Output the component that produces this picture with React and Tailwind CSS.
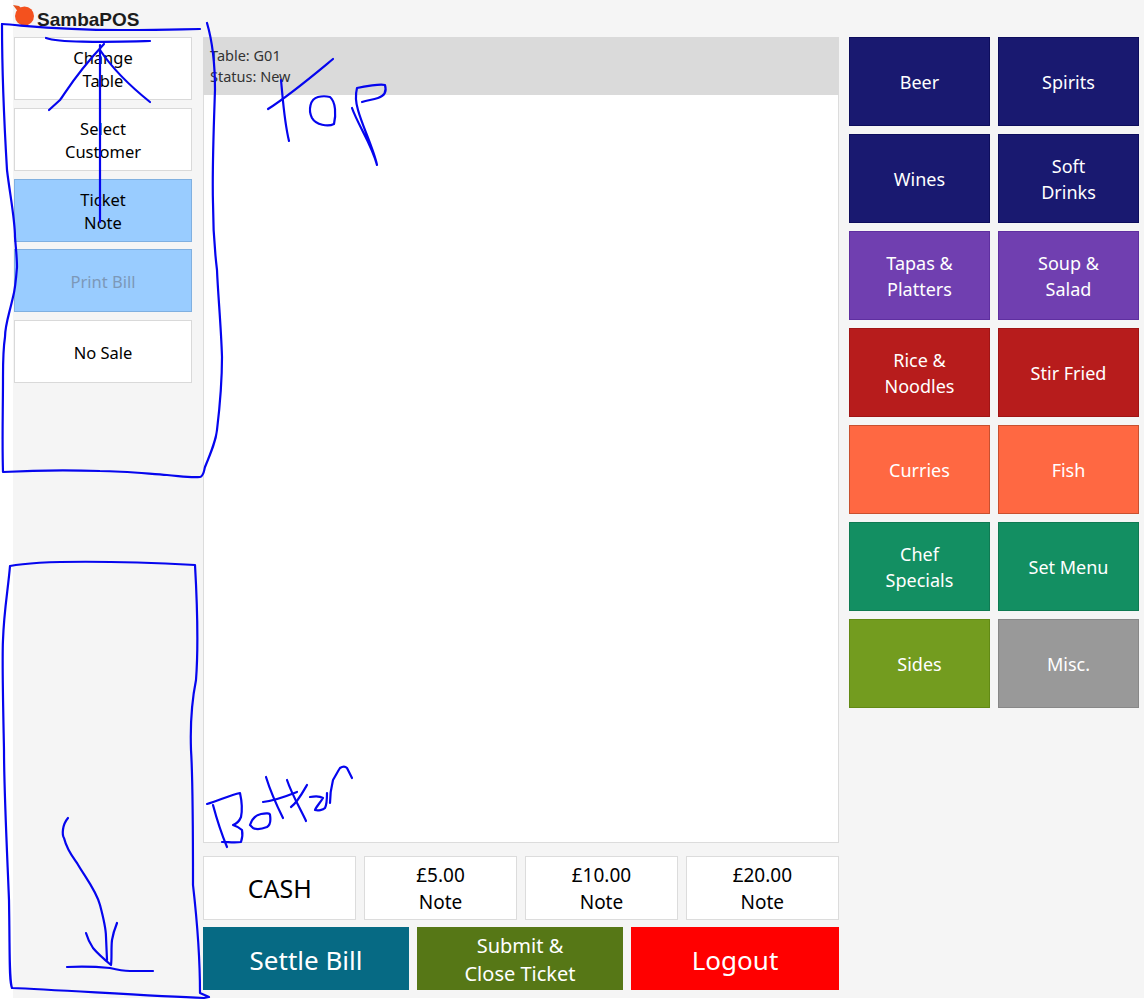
import React from 'react';

const sideButtons = [
  { label: ['Change', 'Table'], className: 'bg-white border-[#d9d9d9] text-black' },
  { label: ['Select', 'Customer'], className: 'bg-white border-[#d9d9d9] text-black' },
  { label: ['Ticket', 'Note'], className: 'bg-[#99ccff] border-[#80b0e0] text-black' },
  { label: ['Print Bill'], className: 'bg-[#99ccff] border-[#80b0e0] text-[#7c98b8]' },
  { label: ['No Sale'], className: 'bg-white border-[#d9d9d9] text-black' },
];

const categories = [
  { label: ['Beer'], className: 'bg-[#191970] border-[#0d0d5c]' },
  { label: ['Spirits'], className: 'bg-[#191970] border-[#0d0d5c]' },
  { label: ['Wines'], className: 'bg-[#191970] border-[#0d0d5c]' },
  { label: ['Soft', 'Drinks'], className: 'bg-[#191970] border-[#0d0d5c]' },
  { label: ['Tapas &', 'Platters'], className: 'bg-[#703fb0] border-[#5f2fa0]' },
  { label: ['Soup &', 'Salad'], className: 'bg-[#703fb0] border-[#5f2fa0]' },
  { label: ['Rice &', 'Noodles'], className: 'bg-[#b71c1c] border-[#a01414]' },
  { label: ['Stir Fried'], className: 'bg-[#b71c1c] border-[#a01414]' },
  { label: ['Curries'], className: 'bg-[#ff6842] border-[#c8502f]' },
  { label: ['Fish'], className: 'bg-[#ff6842] border-[#c8502f]' },
  { label: ['Chef', 'Specials'], className: 'bg-[#138f62] border-[#0f7a52]' },
  { label: ['Set Menu'], className: 'bg-[#138f62] border-[#0f7a52]' },
  { label: ['Sides'], className: 'bg-[#739c1f] border-[#628a14]' },
  { label: ['Misc.'], className: 'bg-[#999999] border-[#888888]' },
];

const notes = [
  { label: ['CASH'], className: 'pt-[2px] text-[25px]' },
  { label: ['£5.00', 'Note'], className: 'pt-[2px] text-[19px] leading-[27px]' },
  { label: ['£10.00', 'Note'], className: 'pt-[2px] text-[19px] leading-[27px]' },
  { label: ['£20.00', 'Note'], className: 'pt-[2px] text-[19px] leading-[27px]' },
];

const Lines = ({ label }) => label.map((line) => <span key={line} className="block">{line}</span>);

// the blue pen marks somebody drew over the screenshot
const scribbles = [
  'M2 24 C30 26 60 30 120 30 S180 29 200 29',
  'M2 24 C2 60 4 120 7 170 C10 195 15 220 15 237 C16 250 17 258 17 267 C16 280 15 290 13 297 C9 315 5 325 5 337 C3 350 3 365 3 377 C3 410 2 440 3 472 C40 470 70 470 100 471 C125 471 150 474 167 475 C180 476 190 478 200 477 C204 476 204 470 205 467 C212 450 216 440 217 430 C220 405 222 380 222 357 C221 325 218 295 217 270 C214 245 213 225 213 203 C212 170 214 120 215 90 C215 60 212 40 207 23',
  'M46 38 C60 43 100 42 150 41',
  'M100 45 L100 222',
  'M49 110 L60 100 C66 92 75 75 104 44',
  'M100 50 C110 65 125 82 150 102',
  'M268 109 C290 95 310 78 333 59',
  'M281 80 C283 100 284 120 289 141',
  'M318 97 C310 99 308 110 312 118 C316 125 328 127 334 124 C336 115 336 102 330 97 C326 96 322 96 318 97',
  'M352 108 C358 125 372 145 377 165 C374 150 362 125 358 110 C355 100 356 92 357 88 C365 86 380 84 385 85 C387 92 384 96 378 98 C372 100 368 100 362 102',
  'M10 566 C40 560 120 561 195 565 C197 600 199 640 196 680 C192 700 190 720 191 750 C193 780 193 850 193 885 C197 920 200 960 200 993 L209 997 L204 998 C150 996 60 990 12 988 C9 980 10 960 9 900 C7 850 4 790 4 750 C3 700 2 660 3 640 C4 610 8 590 10 566',
  'M68 818 C62 825 62 835 64 838 C67 850 72 856 77 863 C85 877 96 890 100 905 C104 920 106 930 106 937 L107 960',
  'M86 933 C88 940 91 945 93 948 C98 954 105 960 111 965 C112 958 111 948 112 940 C113 934 115 928 117 923',
  'M67 967 C85 966 100 967 110 968 C118 970 124 971 130 971 L153 971',
  'M207 804 C218 801 230 795 240 793 C242 802 242 812 241 817 C239 822 236 824 233 825 C236 826 240 828 242 830 C243 835 242 839 241 842 C235 843 228 842 222 842',
  'M213 805 C217 820 222 835 227 847',
  'M266 777 C270 790 278 808 283 818',
  'M263 802 C272 801 287 796 297 792',
  'M287 780 C292 795 302 812 306 821',
  'M291 807 C297 803 303 792 307 785',
  'M250 825 C252 819 256 815 261 814 C266 813 270 813 270 815 C271 821 270 825 267 827 C262 829 257 830 253 828 L250 825',
  'M310 797 C315 796 320 796 323 798 C320 803 316 807 315 810 C318 811 323 810 325 808 C327 804 327 798 327 793',
  'M330 803 C330 795 331 788 333 780 C336 775 338 771 340 768 C343 766 345 766 347 768 L352 778',
];

const App = () => {
  return (
    <div className="relative h-[1000px] w-[1144px] overflow-hidden bg-white font-['Noto_Sans',sans-serif]">
      <div className="ml-[13px] flex h-[998px] bg-[#f5f5f5]">
        {/* left column */}
        <div className="w-[190px] shrink-0">
          <div className="flex h-[37px] items-start">
            <div className="mt-[4px] -ml-[1px] flex items-start">
              <svg width="24" height="22" viewBox="0 0 24 22" className="shrink-0">
                <path d="M1 1 L7 2 L12 7 L7 9 Z" fill="#e8541f" />
                <circle cx="12.5" cy="12" r="9.5" fill="#f4511e" />
              </svg>
              <span className="mt-[5px] ml-[1px] font-['Liberation_Sans',sans-serif] text-[19px] leading-[22px] font-bold text-[#1c1c1c]">SambaPOS</span>
            </div>
          </div>
          <div className="flex w-[179px] flex-col gap-[7.75px] pl-[1px]">
            {sideButtons.map((b) => (
              <div key={b.label[0]} className={`flex h-[63px] flex-col items-center justify-center border pt-[1px] text-[16.5px] leading-[23px] ${b.className}`}>
                <Lines label={b.label} />
              </div>
            ))}
          </div>
        </div>

        {/* ticket and payment */}
        <div className="flex w-[636px] shrink-0 flex-col pt-[37px]">
          <div className="flex h-[806px] flex-col">
            <div className="h-[58px] bg-[#dadada] px-[7px] pt-[8px] text-[14.5px] leading-[21px] text-[#333333]">
              <p>Table: G01</p>
              <p>Status: New</p>
            </div>
            <div className="flex-1 border-x border-b border-[#dcdcdc] bg-white" />
          </div>
          <div className="mt-[13px] grid h-[64px] grid-cols-4 gap-[7.6px]">
            {notes.map((n) => (
              <div key={n.label[0]} className={`flex flex-col items-center justify-center border border-[#dcdcdc] bg-white text-black ${n.className}`}>
                <Lines label={n.label} />
              </div>
            ))}
          </div>
          <div className="mt-[7px] grid h-[63px] grid-cols-[206px_206px_1fr] gap-[8px] text-white">
            <div className="flex items-center justify-center bg-[#066a84] pt-[4px] text-[26px]">Settle Bill</div>
            <div className="flex flex-col items-center justify-center bg-[#567716] pt-[2px] text-[20px] leading-[28px]">
              <span>Submit &amp;</span>
              <span>Close Ticket</span>
            </div>
            <div className="flex items-center justify-center bg-[#ff0000] pt-[4px] text-[26px]">Logout</div>
          </div>
        </div>

        {/* category menu */}
        <div className="ml-[10px] grid w-[290px] grid-cols-2 content-start gap-[8px] pt-[37px]">
          {categories.map((c) => (
            <div key={c.label[0]} className={`flex h-[89px] flex-col items-center justify-center border text-[18px] leading-[26px] text-white ${c.label.length > 1 ? 'pt-[1px]' : ''} ${c.className}`}>
              <Lines label={c.label} />
            </div>
          ))}
        </div>
      </div>

      <svg width="1144" height="1000" viewBox="0 0 1144 1000" fill="none" stroke="#0505ee" strokeWidth="2.2" strokeLinecap="round" strokeLinejoin="round" className="pointer-events-none absolute top-0 left-0">
        {scribbles.map((d) => <path key={d} d={d} />)}
      </svg>
    </div>
  );
};

export default App;
